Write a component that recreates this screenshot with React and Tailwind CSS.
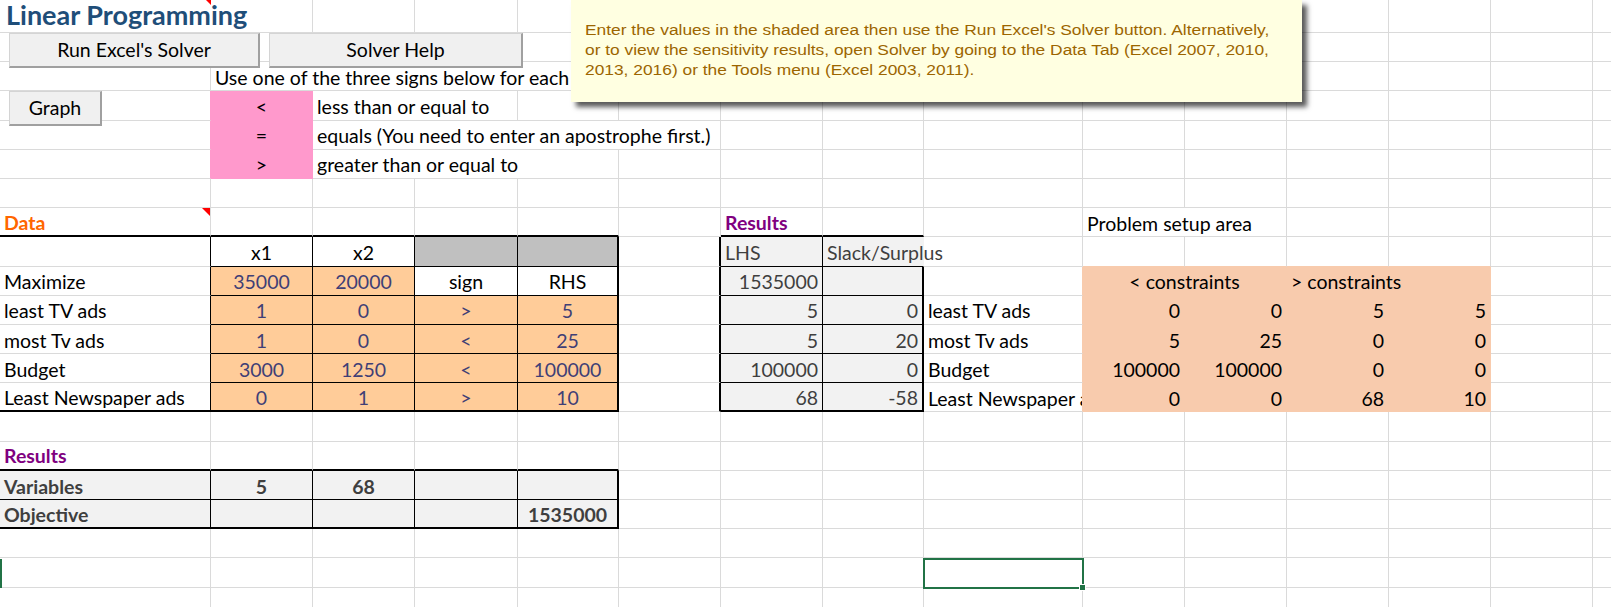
import React from 'react'

const COLS = ['A', 'B', 'C', 'D', 'E', 'F', 'G', 'H', 'I', 'J', 'K', 'L', 'M', 'N', 'O']
const ROW_COUNT = 21

const SPAN = { 2: 'col-span-2', 3: 'col-span-3', 4: 'col-span-4', 7: 'col-span-7' }

const RIGHT = {
  grid: 'border-r border-r-[#dadada]',
  thin: 'border-r border-r-black',
  thick: 'border-r-2 border-r-black',
  none: 'border-r border-r-transparent',
  pink: 'border-r border-r-[#ff99cc]',
  peach: 'border-r border-r-[#f8cbad]',
}

const BOTTOM = {
  grid: 'border-b border-b-[#dadada]',
  thin: 'border-b border-b-black',
  thick: 'border-b-2 border-b-black',
  none: 'border-b border-b-transparent',
  pink: 'border-b border-b-[#ff99cc]',
  peach: 'border-b border-b-[#f8cbad]',
}

const ALIGN = { l: 'justify-start', c: 'justify-center', r: 'justify-end' }

// fills and text styles used on the sheet
const PINK = 'bg-[#ff99cc]'
const PEACH = 'bg-[#f8cbad]'
const GRAY = 'bg-[#c0c0c0]'
const INPUT = 'bg-[#ffcc99] text-[#3f3f76]'
const OUTPUT = 'bg-[#f2f2f2] text-[#3f3f3f]'
const OUTPUT_BOLD = 'bg-[#f2f2f2] text-[#3f3f3f] font-bold'

// 'A9:E14' -> ['A9', 'B9', ...]
const range = spec => {
  const [from, to = from] = spec.split(':')
  const c1 = COLS.indexOf(from[0])
  const c2 = COLS.indexOf(to[0])
  const r1 = Number(from.slice(1))
  const r2 = Number(to.slice(1))
  const refs = []
  for (let r = r1; r <= r2; r++) {
    for (let c = c1; c <= c2; c++) refs.push(COLS[c] + r)
  }
  return refs
}

const right = {}
const bottom = {}
const edge = (map, spec, kind) => range(spec).forEach(ref => (map[ref] = kind))

// Data table
edge(bottom, 'A8:E8', 'thick')
edge(bottom, 'B9:E13', 'thin')
edge(bottom, 'A14:E14', 'thick')
edge(right, 'A9:D14', 'thin')
edge(right, 'E9:E14', 'thick')

// Results (LHS / slack) table
edge(bottom, 'G8:H8', 'thick')
edge(bottom, 'G9:H13', 'thin')
edge(bottom, 'G14:H14', 'thick')
edge(right, 'F9:F14', 'thick')
edge(right, 'G9:G14', 'thin')
edge(right, 'H10:H14', 'thick')
edge(right, 'H9', 'none') // Slack/Surplus runs over this edge

// Results (variables / objective) table
edge(bottom, 'A16:E16', 'thick')
edge(bottom, 'A17:E17', 'thin')
edge(bottom, 'A18:E18', 'thick')
edge(right, 'A17:D18', 'thin')
edge(right, 'E17:E18', 'thick')

// filled areas hide their gridlines
edge(right, 'B4:B6', 'none')
edge(bottom, 'B4:B6', 'none')
edge(right, 'A4:A6', 'pink')
edge(right, 'J10:M14', 'none')
edge(bottom, 'J10:M14', 'none')
edge(right, 'I10:I14', 'peach')
edge(bottom, 'J9:M9', 'peach')

const cells = {
  A1: {
    v: 'Linear Programming',
    span: 2,
    t: 'text-[27px] font-bold text-[#1f4e79]',
    pad: 'pl-[6px] pb-[4px]',
    over: true,
  },
  B3: { v: 'Use one of the three signs below for each constraint.', span: 7 },
  B4: { v: '<', a: 'c', t: PINK },
  C4: { v: 'less than or equal to', span: 2 },
  B5: { v: '=', a: 'c', t: PINK },
  C5: { v: 'equals (You need to enter an apostrophe first.)', span: 4 },
  B6: { v: '>', a: 'c', t: PINK },
  C6: { v: 'greater than or equal to', span: 3 },

  A8: { v: 'Data', t: 'font-bold text-[#ff6600]' },
  G8: { v: 'Results', t: 'font-bold text-[#800080]' },
  J8: { v: 'Problem setup area', span: 2 },

  B9: { v: 'x1', a: 'c' },
  C9: { v: 'x2', a: 'c' },
  D9: { t: GRAY },
  E9: { t: GRAY },
  G9: { v: 'LHS', t: OUTPUT },
  H9: { v: 'Slack/Surplus', t: OUTPUT, over: true },

  A10: { v: 'Maximize' },
  B10: { v: '35000', a: 'c', t: INPUT },
  C10: { v: '20000', a: 'c', t: INPUT },
  D10: { v: 'sign', a: 'c' },
  E10: { v: 'RHS', a: 'c' },
  G10: { v: '1535000', a: 'r', t: OUTPUT },
  H10: { t: OUTPUT },
  J10: { v: '< constraints', span: 2, a: 'c', t: PEACH },
  L10: { v: '> constraints', span: 2, t: PEACH },

  A16: { v: 'Results', t: 'font-bold text-[#800080]' },
  A17: { v: 'Variables', t: OUTPUT_BOLD },
  B17: { v: '5', a: 'c', t: OUTPUT_BOLD },
  C17: { v: '68', a: 'c', t: OUTPUT_BOLD },
  D17: { t: OUTPUT_BOLD },
  E17: { t: OUTPUT_BOLD },
  A18: { v: 'Objective', t: OUTPUT_BOLD },
  B18: { t: OUTPUT_BOLD },
  C18: { t: OUTPUT_BOLD },
  D18: { t: OUTPUT_BOLD },
  E18: { v: '1535000', a: 'c', t: OUTPUT_BOLD },
}

const constraints = [
  { name: 'least TV ads', x1: 1, x2: 0, sign: '>', rhs: 5, lhs: 5, slack: 0, setup: [0, 0, 5, 5] },
  { name: 'most Tv ads', x1: 1, x2: 0, sign: '<', rhs: 25, lhs: 5, slack: 20, setup: [5, 25, 0, 0] },
  { name: 'Budget', x1: 3000, x2: 1250, sign: '<', rhs: 100000, lhs: 100000, slack: 0, setup: [100000, 100000, 0, 0] },
  { name: 'Least Newspaper ads', x1: 0, x2: 1, sign: '>', rhs: 10, lhs: 68, slack: -58, setup: [0, 0, 68, 10] },
]

constraints.forEach((row, i) => {
  const r = 11 + i
  cells['A' + r] = { v: row.name }
  cells['B' + r] = { v: row.x1, a: 'c', t: INPUT }
  cells['C' + r] = { v: row.x2, a: 'c', t: INPUT }
  cells['D' + r] = { v: row.sign, a: 'c', t: INPUT }
  cells['E' + r] = { v: row.rhs, a: 'c', t: INPUT }
  cells['G' + r] = { v: row.lhs, a: 'r', t: OUTPUT }
  cells['H' + r] = { v: row.slack, a: 'r', t: OUTPUT }
  cells['I' + r] = { v: row.name }
  ;['J', 'K', 'L', 'M'].forEach((col, j) => {
    cells[col + r] = { v: row.setup[j], a: 'r', t: PEACH }
  })
})

const Cell = ({ cellRef, endRef, cell }) => {
  const r = RIGHT[right[endRef] || 'grid']
  const b = BOTTOM[bottom[cellRef] || 'grid']
  return (
    <div
      className={`flex items-end whitespace-nowrap ${cell?.pad || 'px-[4px] pb-[3px]'} ${
        cell?.over ? 'relative z-10 overflow-visible' : 'overflow-hidden'
      } ${ALIGN[cell?.a || 'l']} ${SPAN[cell?.span] || ''} ${r} ${b} ${cell?.t || ''}`}
    >
      {cell?.v !== undefined ? String(cell.v) : ''}
    </div>
  )
}

const SheetButton = ({ label, className }) => (
  <div
    className={`absolute flex items-center justify-center bg-[#f0f0f0] border border-[#d4d4d4] border-r-2 border-b-2 border-r-[#a0a0a0] border-b-[#a0a0a0] ${className}`}
  >
    {label}
  </div>
)

const Flag = ({ className }) => (
  <div className={`absolute z-20 w-[8px] h-[8px] bg-[#ff0000] [clip-path:polygon(0_0,100%_0,100%_100%)] ${className}`} />
)

export default function App() {
  const items = []
  for (let r = 1; r <= ROW_COUNT; r++) {
    let c = 0
    while (c < COLS.length) {
      const ref = COLS[c] + r
      const cell = cells[ref]
      const span = cell?.span || 1
      const endRef = COLS[Math.min(c + span - 1, COLS.length - 1)] + r
      items.push(<Cell key={ref} cellRef={ref} endRef={endRef} cell={cell} />)
      c += span
    }
  }

  return (
    <div className="relative w-[1611px] h-[607px] overflow-hidden bg-white font-['Lato',sans-serif] text-[19.5px] leading-none text-black">
      <div className="grid grid-cols-[211px_102px_102px_103px_101px_102px_102px_101px_159px_102px_102px_102px_102px_102px_102px] grid-rows-[33px_repeat(20,29.2px)]">
        {items}
      </div>

      {/* comment markers */}
      <Flag className="left-[203px] top-[-3px]" />
      <Flag className="left-[202px] top-[208px]" />

      {/* form buttons */}
      <SheetButton label="Run Excel's Solver" className="z-30 left-[9px] top-[33px] w-[251px] h-[35px]" />
      <SheetButton label="Solver Help" className="z-30 left-[269px] top-[33px] w-[254px] h-[35px]" />
      <SheetButton label="Graph" className="z-30 left-[9px] top-[91px] w-[93px] h-[35px]" />

      {/* comment box */}
      <div className="absolute z-30 left-[571px] top-0 w-[731px] h-[102px] bg-[#ffffe1] shadow-[5px_5px_5px_rgba(0,0,0,0.65)] pl-[14px] pt-[20px] font-['Liberation_Sans',Arial,sans-serif] text-[15.5px] leading-[20px] text-[#9c6500] whitespace-nowrap">
        <div className="origin-left scale-x-[1.12]">
          Enter the values in the shaded area then use the Run Excel's Solver button. Alternatively,
          <br />
          or to view the sensitivity results, open Solver by going to the Data Tab (Excel 2007, 2010,
          <br />
          2013, 2016) or the Tools menu (Excel 2003, 2011).
        </div>
      </div>

      {/* active cell */}
      <div className="absolute left-[923px] top-[558px] w-[161px] h-[31px] border-2 border-[#217346]">
        <div className="absolute right-[-4px] bottom-[-4px] w-[7px] h-[7px] bg-[#217346] border border-white" />
      </div>
      <div className="absolute left-0 top-[559px] w-[2px] h-[29px] bg-[#217346]" />
    </div>
  )
}
